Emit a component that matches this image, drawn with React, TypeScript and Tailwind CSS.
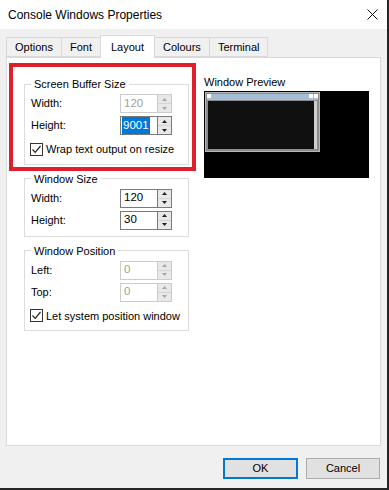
import React from 'react';

const font = { fontFamily: '"Liberation Sans", Arial, sans-serif' };

function Arrow({ up, disabled }: { up: boolean; disabled?: boolean }) {
  return (
    <svg width="5" height="3" viewBox="0 0 5 3" className="block">
      <polygon
        points={up ? '2.5,0 5,3 0,3' : '0,0 5,0 2.5,3'}
        fill={disabled ? '#a8a8a8' : '#202020'}
      />
    </svg>
  );
}

function Spin({ value, disabled, selected }: { value: string; disabled?: boolean; selected?: boolean }) {
  return (
    <div className="flex h-[19px]">
      <div
        className={`w-[38px] h-full flex items-center bg-white border pl-[1px] text-[11.5px] ${
          disabled ? 'border-[#cccccc] text-[#a0a0a0]' : 'border-[#7a7a7a] text-black'
        }`}
      >
        {selected ? (
          <span className="h-full flex items-center bg-[#0078d7] text-white px-[1px]">{value}</span>
        ) : (
          <span className="pl-[2px]">{value}</span>
        )}
      </div>
      <div
        className={`w-[14px] h-full flex flex-col border border-l-0 ${
          disabled ? 'border-[#cccccc]' : 'border-[#7a7a7a]'
        }`}
      >
        <div className="flex-1 flex items-center justify-center bg-[#e8e8e8] border-b border-[#d4d4d4]">
          <Arrow up disabled={disabled} />
        </div>
        <div className="flex-1 flex items-center justify-center bg-[#e8e8e8]">
          <Arrow up={false} disabled={disabled} />
        </div>
      </div>
    </div>
  );
}

function Row({ label, value, disabled, selected }: { label: string; value: string; disabled?: boolean; selected?: boolean }) {
  return (
    <div className="flex items-center">
      <span className="w-[95px] pl-[6px] text-[11px] text-black">{label}</span>
      <Spin value={value} disabled={disabled} selected={selected} />
    </div>
  );
}

function Check({ label }: { label: string }) {
  return (
    <div className="flex items-center gap-[3px] pl-[5px] text-[11px] text-black">
      <div className="w-[13px] h-[13px] border border-[#333333] bg-white flex items-center justify-center">
        <svg width="11" height="11" viewBox="0 0 11 11">
          <polyline points="1.5,5.5 4.2,8.3 9.5,2" fill="none" stroke="#222" strokeWidth="1.2" />
        </svg>
      </div>
      <span className="whitespace-nowrap">{label}</span>
    </div>
  );
}

function Group({ title, children }: { title: string; children: React.ReactNode }) {
  return (
    <fieldset className="w-[165px] border border-[#dcdcdc] pb-[6px]">
      <legend className="ml-[6px] px-[3px] text-[11px] leading-[14px] text-black">{title}</legend>
      <div className="flex flex-col gap-[3px] pt-[3px]">{children}</div>
    </fieldset>
  );
}

export default function App() {
  return (
    <div
      className="w-[389px] h-[490px] bg-[#f0f0f0] flex flex-col border-r-2 border-b-2 border-[#262626] overflow-hidden"
      style={font}
    >
      <div className="h-[29px] shrink-0 bg-white flex items-center justify-between pl-[8px] pr-[9px]">
        <span className="text-[12px] text-black">Console Windows Properties</span>
        <svg width="11" height="11" viewBox="0 0 11 11">
          <path d="M0.5 0.5 L10.5 10.5 M10.5 0.5 L0.5 10.5" stroke="#111" strokeWidth="1" />
        </svg>
      </div>

      <div className="px-[6px] pt-[6px] flex flex-col">
        <div className="flex items-end h-[22px]">
          {['Options', 'Font', 'Layout', 'Colours', 'Terminal'].map((t) =>
            t === 'Layout' ? (
              <div
                key={t}
                className="h-[23px] -mb-px -ml-px relative z-10 bg-white border border-b-0 border-[#d9d9d9] px-[10px] flex items-center text-[11px] text-black"
              >
                {t}
              </div>
            ) : (
              <div
                key={t}
                className="h-[20px] bg-[#f0f0f0] border border-[#d9d9d9] -ml-px first:ml-0 px-[8px] flex items-center text-[11px] text-black"
              >
                {t}
              </div>
            )
          )}
        </div>

        <div className="h-[389px] bg-white border border-[#d9d9d9] flex pt-[19px]">
          <div className="w-[190px] pl-[17px] flex flex-col items-start gap-[7px]">
            <div className="relative w-[165px]">
              <div className="absolute -left-[15px] -right-[7px] -top-[14px] -bottom-[6px] border-4 border-[#df1f2a] pointer-events-none" />
              <Group title="Screen Buffer Size">
                <Row label="Width:" value="120" disabled />
                <Row label="Height:" value="9001" selected />
                <div className="pt-[3px]">
                  <Check label="Wrap text output on resize" />
                </div>
              </Group>
            </div>
            <Group title="Window Size">
              <Row label="Width:" value="120" />
              <Row label="Height:" value="30" />
            </Group>
            <Group title="Window Position">
              <Row label="Left:" value="0" disabled />
              <Row label="Top:" value="0" disabled />
              <div className="pt-[3px]">
                <Check label="Let system position window" />
              </div>
            </Group>
          </div>

          <div className="pl-[7px] -mt-[2px] flex flex-col">
            <span className="text-[11px] leading-[14px] text-black">Window Preview</span>
            <div className="mt-[2px] w-[165px] h-[87px] bg-black p-[1px]">
              <div className="w-[115px] h-[60px] bg-[#8c8c8c] border border-[#b5b5b5] p-[1px] flex flex-col">
                <div className="h-[6px] bg-[#a6bdd6] flex justify-between items-start">
                  <div className="w-[4px] h-[4px] bg-white" />
                  <div className="flex gap-[1px]">
                    <div className="w-[4px] h-[4px] bg-white" />
                    <div className="w-[4px] h-[4px] bg-white" />
                  </div>
                </div>
                <div className="flex-1 flex m-[1px]">
                  <div className="flex-1 bg-[#101010]" />
                  <div className="w-[3px] bg-[#cfcfcf]" />
                </div>
              </div>
            </div>
          </div>
        </div>

        <div className="flex justify-end gap-[8px] pt-[12px] pr-[1px]">
          <button className="w-[75px] h-[21px] bg-[#e1e1e1] border-2 border-[#0078d7] text-[11px] text-black">
            OK
          </button>
          <button className="w-[74px] h-[21px] bg-[#e1e1e1] border border-[#adadad] text-[11px] text-black">
            Cancel
          </button>
        </div>
      </div>
    </div>
  );
}
